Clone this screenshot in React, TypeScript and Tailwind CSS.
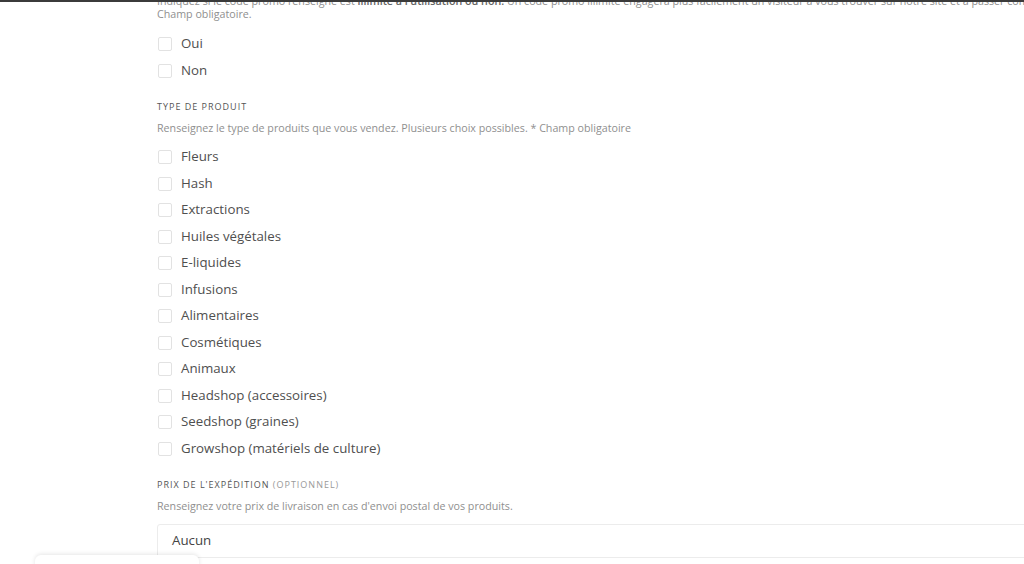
import React from "react";

const opts1 = ["Oui", "Non"];
const opts2 = [
  "Fleurs",
  "Hash",
  "Extractions",
  "Huiles végétales",
  "E-liquides",
  "Infusions",
  "Alimentaires",
  "Cosmétiques",
  "Animaux",
  "Headshop (accessoires)",
  "Seedshop (graines)",
  "Growshop (matériels de culture)",
];

function Row({ label }: { label: string }) {
  return (
    <label className="flex h-[26.5px] items-center">
      <span className="ml-[1px] h-[14px] w-[14px] rounded-[2px] border border-[#e2e2e2] bg-white" />
      <span className="ml-[9px] text-[13.3px] text-[#4f4f4f]">{label}</span>
    </label>
  );
}

export default function App() {
  return (
    <div
      className="relative h-[564px] w-[1024px] overflow-hidden bg-white"
      style={{ fontFamily: '"Open Sans", "Noto Sans", sans-serif' }}
    >
      <div className="absolute left-0 top-0 z-10 h-[2px] w-full bg-[#3b3b3b]" />
      <div className="w-[1120px] pl-[157px]">
        <p className="mt-[-5px] text-[10.7px] leading-[13px] text-[#8f8f8f]">
          <span className="whitespace-nowrap">
            Indiquez si le code promo renseigné est{" "}
            <b className="font-semibold text-[#666]">illimité à l'utilisation ou non.</b> Un code promo illimité
            engagera plus facilement un visiteur à vous trouver sur notre site et à passer commande. *
          </span>
          <br />
          Champ obligatoire.
        </p>
        <div className="mt-[10px] flex flex-col">
          {opts1.map((o) => (
            <Row key={o} label={o} />
          ))}
        </div>
        <div className="mt-[16px] text-[9px] leading-[13px] tracking-[1px] text-[#555]">TYPE DE PRODUIT</div>
        <p className="mt-[9px] text-[10.7px] leading-[13px] text-[#8f8f8f]">
          Renseignez le type de produits que vous vendez. Plusieurs choix possibles. * Champ obligatoire
        </p>
        <div className="mt-[9px] flex flex-col">
          {opts2.map((o) => (
            <Row key={o} label={o} />
          ))}
        </div>
        <div className="mt-[16px] text-[9px] leading-[13px] tracking-[1px] text-[#555]">
          PRIX DE L'EXPÉDITION <span className="text-[#999]">(OPTIONNEL)</span>
        </div>
        <p className="mt-[9px] text-[10.7px] leading-[13px] text-[#8f8f8f]">
          Renseignez votre prix de livraison en cas d'envoi postal de vos produits.
        </p>
        <div className="mt-[11px] flex h-[34px] items-center rounded-[3px] border border-[#ececec] bg-white pl-[14px] text-[13.3px] text-[#444]">
          Aucun
        </div>
      </div>
      <div className="absolute left-[35px] top-[555px] h-[20px] w-[164px] rounded-t-[6px] bg-white shadow-[0_-1px_4px_rgba(0,0,0,0.1)]" />
    </div>
  );
}
